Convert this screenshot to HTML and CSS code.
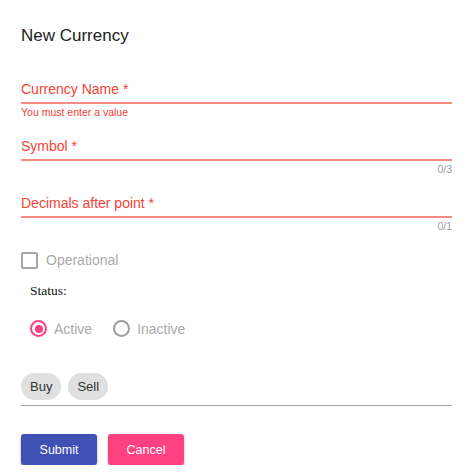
FILE: index.html
```html
<!DOCTYPE html>
<html>
<head>
<meta charset="utf-8">
<link rel="stylesheet" href="styles.css">
</head>
<body>
<div class="dialog">
  <h2 class="title">New Currency</h2>

  <div class="field">
    <div class="field-label">Currency Name *</div>
    <div class="field-line"></div>
    <div class="field-hint"><span class="error">You must enter a value</span></div>
  </div>

  <div class="field">
    <div class="field-label">Symbol *</div>
    <div class="field-line"></div>
    <div class="field-hint hint-end"><span class="counter">0/3</span></div>
  </div>

  <div class="field">
    <div class="field-label">Decimals after point *</div>
    <div class="field-line"></div>
    <div class="field-hint hint-end"><span class="counter">0/1</span></div>
  </div>

  <div class="check-row">
    <span class="check-box"></span>
    <span class="check-text">Operational</span>
  </div>

  <div class="status">Status:</div>

  <div class="radio-row">
    <div class="radio">
      <span class="radio-circle checked"><span class="radio-dot"></span></span>
      <span class="radio-text">Active</span>
    </div>
    <div class="radio">
      <span class="radio-circle"></span>
      <span class="radio-text">Inactive</span>
    </div>
  </div>

  <div class="chip-list">
    <span class="chip">Buy</span>
    <span class="chip">Sell</span>
  </div>

  <div class="actions">
    <button class="btn btn-primary">Submit</button>
    <button class="btn btn-accent">Cancel</button>
  </div>
</div>
</body>
</html>
```

FILE: styles.css
```css
html, body {
  margin: 0;
  padding: 0;
  background: #ffffff;
}

body {
  font-family: "Liberation Sans", Arial, sans-serif;
  color: #212121;
}

.dialog {
  padding: 26px 22px 0 21px;
}

.title {
  margin: 0 0 35px;
  font-size: 17px;
  line-height: 20px;
  font-weight: normal;
  color: #212121;
}

.field {
  margin-bottom: 20px;
}

.field-label {
  font-size: 14px;
  line-height: 16px;
  color: #f44336;
  padding-bottom: 5px;
}

.field-line {
  height: 2px;
  background: #f28b82;
}

.field-hint {
  display: flex;
  margin-top: 2px;
  font-size: 10.5px;
  line-height: 12px;
  height: 12px;
}

.hint-end {
  justify-content: flex-end;
}

.error {
  color: #f44336;
}

.counter {
  color: #9e9e9e;
}

.check-row {
  display: flex;
  align-items: center;
  height: 16px;
  gap: 8px;
}

.check-box {
  box-sizing: border-box;
  width: 17px;
  height: 17px;
  border: 2px solid #a6a6a6;
  border-radius: 2px;
}

.check-text {
  font-size: 14px;
  line-height: 16px;
  color: #ababab;
}

.status {
  margin-top: 15px;
  padding-left: 9px;
  font-family: "Liberation Serif", "Times New Roman", serif;
  font-size: 13.5px;
  line-height: 16px;
  color: #111;
}

.radio-row {
  display: flex;
  align-items: center;
  margin-top: 21px;
  padding-left: 9px;
  gap: 21px;
  height: 17px;
}

.radio {
  display: flex;
  align-items: center;
  gap: 7px;
}

.radio-circle {
  box-sizing: border-box;
  width: 17px;
  height: 17px;
  border: 2px solid #9e9e9e;
  border-radius: 50%;
  display: flex;
  align-items: center;
  justify-content: center;
}

.radio-circle.checked {
  border-color: #ff4081;
}

.radio-dot {
  width: 8px;
  height: 8px;
  border-radius: 50%;
  background: #ff4081;
}

.radio-text {
  font-size: 14px;
  line-height: 16px;
  color: #ababab;
}

.chip-list {
  display: flex;
  gap: 7px;
  margin-top: 36px;
  padding-bottom: 5px;
  border-bottom: 1px solid #a4a4a4;
}

.chip {
  display: flex;
  align-items: center;
  height: 27px;
  padding: 0 9px;
  border-radius: 14px;
  background: #e0e0e0;
  font-size: 13px;
  color: #333;
}

.actions {
  display: flex;
  gap: 11px;
  margin-top: 28px;
}

.btn {
  width: 76px;
  height: 31px;
  border: none;
  border-radius: 3px;
  font-family: "Liberation Sans", Arial, sans-serif;
  font-size: 12.5px;
  color: #ffffff;
  padding: 0;
  box-shadow: 0 2px 2px rgba(0, 0, 0, 0.22), 0 1px 4px rgba(0, 0, 0, 0.12);
}

.btn-primary {
  background: #3f51b5;
}

.btn-accent {
  background: #ff4081;
}
```
